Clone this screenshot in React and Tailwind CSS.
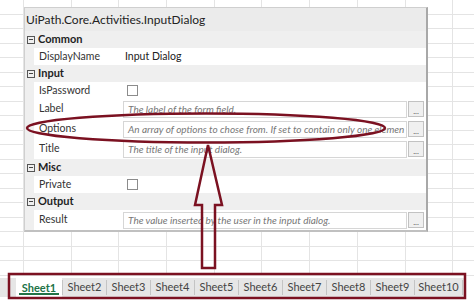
const sheets = ["Sheet1", "Sheet2", "Sheet3", "Sheet4", "Sheet5", "Sheet6", "Sheet7", "Sheet8", "Sheet9", "Sheet10"];

function Expander() {
  return (
    <span className="w-[8px] h-[8px] border border-[#555] flex items-center justify-center">
      <span className="w-[4px] h-px bg-[#444]" />
    </span>
  );
}

function Header({ title }) {
  return (
    <div className="h-[17px] flex items-center gap-[3px] pl-[2px] bg-[#efefef]">
      <Expander />
      <span className="font-bold text-[11px] text-[#1e1e1e]">{title}</span>
    </div>
  );
}

function Row({ label, tall, children }) {
  return (
    <div className={tall ? "h-[20px] flex" : "h-[17px] flex"}>
      <div className="w-[9px] bg-[#efefef]" />
      <div className="w-[89px] pl-[5px] flex items-center text-[10.5px] text-[#333]">{label}</div>
      <div className="flex-1 min-w-0 flex items-center">{children}</div>
    </div>
  );
}

function TextBox({ hint }) {
  return (
    <>
      <div className="flex-1 min-w-0 h-[17px] border border-[#d6d6d6] bg-white flex items-center pl-[4px] overflow-hidden whitespace-nowrap italic text-[10px] text-[#777]">
        {hint}
      </div>
      <div className="w-[16px] h-[16px] ml-px mr-[2px] border border-[#c2c2c2] bg-[#f0f0f0] flex items-end justify-center text-[8px] leading-[10px] text-[#555]">
        ...
      </div>
    </>
  );
}

function CheckBox() {
  return <span className="ml-[4px] w-[11px] h-[11px] border border-[#8c8c8c] bg-white" />;
}

export default function App() {
  return (
    <div className="relative w-[474px] h-[305px] overflow-hidden bg-white font-['Lato',sans-serif]">
      {/* spreadsheet grid */}
      <div className="h-[278px] overflow-hidden grid grid-cols-[24px_repeat(10,47.7px)] auto-rows-[14.5px]">
        {Array.from({ length: 19 * 11 }).map((_, i) => (
          <div key={i} className="border-r border-b border-[#e4e4e4]" />
        ))}
      </div>

      {/* sheet tabs */}
      <div className="w-[466px] h-[19px] flex bg-[#e6e6e6] pl-[16px]">
        {sheets.map((s, i) =>
          i === 0 ? (
            <div key={s} className="w-[46px] flex flex-col items-center justify-center bg-white relative">
              <span className="text-[11px] font-bold text-[#217346] leading-none">{s}</span>
              <span className="absolute bottom-[2px] left-[3px] right-[3px] h-[2px] bg-[#217346]" />
            </div>
          ) : (
            <div
              key={s}
              className={
                i === 9
                  ? "w-[48px] flex items-center justify-center text-[11px] text-[#444] border-l border-[#c4c4c4] my-[2px]"
                  : "w-[44px] flex items-center justify-center text-[11px] text-[#444] border-l border-[#c4c4c4] my-[2px]"
              }
            >
              {s}
            </div>
          )
        )}
        <div className="border-l border-[#c4c4c4] my-[2px]" />
      </div>

      {/* property panel floating over the sheet */}
      <div className="absolute left-[24px] top-[7px] w-[404px] flex flex-col bg-white border border-[#cfcfcf] border-r-2 border-r-[#a8a8a8] border-b-2 border-b-[#c0c0c0]">
        <div className="h-[23px] flex items-center pl-[1px] bg-[#ebebeb] text-[12px] text-[#222]">
          UiPath.Core.Activities.InputDialog
        </div>
        <Header title="Common" />
        <Row label="DisplayName">
          <span className="pl-[2px] text-[10.5px] text-[#222]">Input Dialog</span>
        </Row>
        <Header title="Input" />
        <Row label="IsPassword">
          <CheckBox />
        </Row>
        <Row label="Label" tall>
          <TextBox hint="The label of the form field." />
        </Row>
        <Row label="Options" tall>
          <TextBox hint="An array of options to chose from. If set to contain only one elemen" />
        </Row>
        <Row label="Title" tall>
          <TextBox hint="The title of the input dialog." />
        </Row>
        <Header title="Misc" />
        <Row label="Private">
          <CheckBox />
        </Row>
        <Header title="Output" />
        <Row label="Result" tall>
          <TextBox hint="The value inserted by the user in the input dialog." />
        </Row>
      </div>

      {/* annotations */}
      <svg className="absolute inset-0 pointer-events-none" width="474" height="305" viewBox="0 0 474 305">
        <ellipse cx="206" cy="128" rx="179" ry="14.5" fill="none" stroke="#7b1121" strokeWidth="2.5" />
        <path
          d="M208 145 L222 205 L215 205 L215 268 L202 268 L202 205 L195 205 Z"
          fill="none"
          stroke="#7b1121"
          strokeWidth="2.5"
        />
        <rect x="9" y="274" width="456" height="24" fill="none" stroke="#7b1121" strokeWidth="2.5" />
      </svg>
    </div>
  );
}
